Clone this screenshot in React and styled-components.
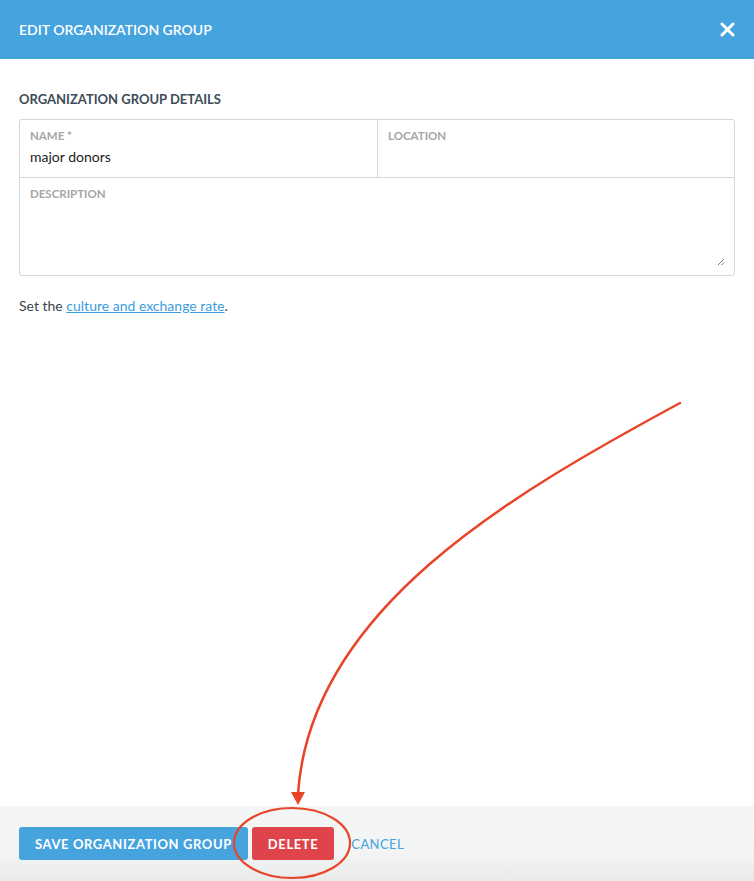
import React from "react";
import styled, { createGlobalStyle } from "styled-components";

const GlobalStyle = createGlobalStyle`
  html, body {
    margin: 0;
    padding: 0;
    background: #ffffff;
  }
  body {
    font-family: Lato, "Open Sans", "Liberation Sans", sans-serif;
    -webkit-font-smoothing: antialiased;
  }
  * {
    box-sizing: border-box;
  }
`;

const Page = styled.div`
  position: relative;
  display: flex;
  flex-direction: column;
  width: 754px;
  height: 881px;
  overflow: hidden;
`;

const Header = styled.header`
  display: flex;
  align-items: center;
  justify-content: space-between;
  height: 59px;
  padding: 0 16px 0 19px;
  background: #45a3de;
  color: #ffffff;
  h1 {
    margin: 0;
    font-size: 14px;
    font-weight: 600;
    letter-spacing: 0;
  }
`;

const CloseButton = styled.button`
  display: flex;
  align-items: center;
  justify-content: center;
  width: 22px;
  height: 22px;
  padding: 0;
  border: none;
  background: transparent;
  cursor: pointer;
`;

const Body = styled.main`
  flex: 1;
  padding: 32px 19px 0;
`;

const SectionTitle = styled.h2`
  margin: 0 0 12px;
  font-size: 13px;
  font-weight: 700;
  color: #3d4c58;
  line-height: 16px;
`;

const FormBox = styled.div`
  display: grid;
  grid-template-columns: 358px 1fr;
  grid-template-rows: 57px 98px;
  border: 1px solid #d6d6d6;
  border-radius: 3px;
`;

const Field = styled.div`
  position: relative;
  display: flex;
  flex-direction: column;
  padding: 9px 10px;
  grid-column: ${(p) => (p.$wide ? "1 / span 2" : "auto")};
  border-right: ${(p) => (p.$divider ? "1px solid #d6d6d6" : "none")};
  border-top: ${(p) => (p.$wide ? "1px solid #d6d6d6" : "none")};
`;

const Label = styled.label`
  font-size: 11.5px;
  font-weight: 700;
  color: #a6a6a6;
  line-height: 14px;
  text-transform: uppercase;
`;

const Value = styled.div`
  margin-top: 5px;
  font-size: 14px;
  color: #1b1b1b;
  line-height: 18px;
`;

const Grip = styled.svg`
  position: absolute;
  right: 9px;
  bottom: 9px;
`;

const Hint = styled.p`
  margin: 21px 0 0;
  font-size: 14px;
  color: #3b4650;
  a {
    color: #3a9de0;
    text-decoration: underline;
  }
`;

const Footer = styled.footer`
  display: flex;
  align-items: center;
  gap: 4px;
  height: 75px;
  padding: 0 19px;
  background: linear-gradient(#f4f5f5 0%, #f3f4f4 60%, #e9eaea 100%);
`;

const Button = styled.button`
  height: 33px;
  padding: 0 16px;
  border: none;
  border-radius: 3px;
  background: ${(p) => p.$bg};
  color: #ffffff;
  font-family: inherit;
  font-size: 13px;
  font-weight: 700;
  letter-spacing: 0.6px;
  text-transform: uppercase;
  cursor: pointer;
`;

const LinkButton = styled.button`
  margin-left: 13px;
  padding: 0;
  border: none;
  background: transparent;
  color: #45a3de;
  font-family: inherit;
  font-size: 13px;
  letter-spacing: 0.4px;
  text-transform: uppercase;
  cursor: pointer;
`;

const Annotation = styled.svg`
  position: absolute;
  left: 0;
  top: 0;
  pointer-events: none;
`;

export default function App() {
  return (
    <>
      <GlobalStyle />
      <Page>
        <Header>
          <h1>EDIT ORGANIZATION GROUP</h1>
          <CloseButton aria-label="Close">
            <svg width="15" height="15" viewBox="0 0 15 15">
              <path
                d="M2 2 L13 13 M13 2 L2 13"
                stroke="#ffffff"
                strokeWidth="3"
                strokeLinecap="round"
              />
            </svg>
          </CloseButton>
        </Header>

        <Body>
          <SectionTitle>ORGANIZATION GROUP DETAILS</SectionTitle>
          <FormBox>
            <Field $divider>
              <Label>Name *</Label>
              <Value>major donors</Value>
            </Field>
            <Field>
              <Label>Location</Label>
            </Field>
            <Field $wide>
              <Label>Description</Label>
              <Grip width="8" height="8" viewBox="0 0 8 8">
                <path d="M7 1 L1 7 M7 4.5 L4.5 7" stroke="#777" strokeWidth="1" />
              </Grip>
            </Field>
          </FormBox>
          <Hint>
            Set the <a href="#">culture and exchange rate</a>.
          </Hint>
        </Body>

        <Footer>
          <Button $bg="#45a3de">Save Organization Group</Button>
          <Button $bg="#e0444b">Delete</Button>
          <LinkButton>Cancel</LinkButton>
        </Footer>

        <Annotation width="754" height="881" viewBox="0 0 754 881">
          <path
            d="M680 403 C 510 495, 310 610, 298 794"
            fill="none"
            stroke="#e8442a"
            strokeWidth="2.5"
            strokeLinecap="round"
          />
          <polygon points="291,792 305,792 298,805" fill="#e8442a" />
          <ellipse
            cx="292"
            cy="843"
            rx="58"
            ry="35"
            fill="none"
            stroke="#e8442a"
            strokeWidth="2.2"
          />
        </Annotation>
      </Page>
    </>
  );
}
